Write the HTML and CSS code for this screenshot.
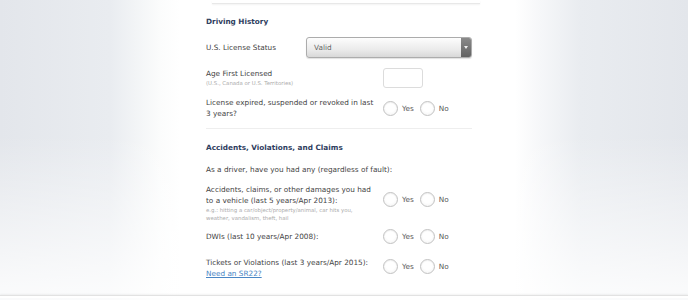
FILE: index.html
```
<!doctype html>
<html>
<head>
<meta charset="utf-8">
<title>Driving History</title>
<link rel="stylesheet" href="styles.css">
</head>
<body>
	<div class="top-edge"></div>
	<div class="form">
		<h2 class="title">Driving History</h2>

		<div class="row row-status">
			<div class="label label-short">U.S. License Status</div>
			<div class="select">
				<span class="select-text">Valid</span>
				<span class="select-arrow"></span>
			</div>
		</div>

		<div class="row row-age">
			<div class="label">
				Age First Licensed
				<div class="hint">(U.S., Canada or U.S. Territories)</div>
			</div>
			<div class="input"></div>
		</div>

		<div class="row row-expired">
			<div class="label">License expired, suspended or revoked in last 3 years?</div>
			<div class="options">
				<span class="radio"></span><span class="opt">Yes</span>
				<span class="radio"></span><span class="opt">No</span>
			</div>
		</div>

		<div class="divider"></div>

		<h2 class="title title-2">Accidents, Violations, and Claims</h2>
		<p class="intro">As a driver, have you had any (regardless of fault):</p>

		<div class="row row-acc">
			<div class="label">
				Accidents, claims, or other damages you had to a vehicle (last 5 years/Apr 2013):
				<div class="hint">e.g.: hitting a car/object/property/animal, car hits you, weather, vandalism, theft, hail</div>
			</div>
			<div class="options options-up">
				<span class="radio"></span><span class="opt">Yes</span>
				<span class="radio"></span><span class="opt">No</span>
			</div>
		</div>

		<div class="row row-dwi">
			<div class="label">DWIs (last 10 years/Apr 2008):</div>
			<div class="options">
				<span class="radio"></span><span class="opt">Yes</span>
				<span class="radio"></span><span class="opt">No</span>
			</div>
		</div>

		<div class="row row-tickets">
			<div class="label">
				Tickets or Violations (last 3 years/Apr 2015):
				<a href="javascript:;" class="link">Need an SR22?</a>
			</div>
			<div class="options options-up2">
				<span class="radio"></span><span class="opt">Yes</span>
				<span class="radio"></span><span class="opt">No</span>
			</div>
		</div>
	</div>
	<div class="bottom-edge"></div>
</body>
</html>
```
FILE: styles.css
```
*{margin:0; padding:0;}
html,body{height:300px; overflow:hidden;}
body{
	font-family:"DejaVu Sans", Verdana, sans-serif;
	font-size:7.3px;
	line-height:11px;
	color:#444;
	background:
		linear-gradient(to bottom, rgba(255,255,255,0) 45%, rgba(255,255,255,0.8) 96%),
		linear-gradient(to right, #e3e6eb 0, #e9ecf0 110px, #fbfcfc 160px, #fff 180px, #fff 515px, #f6f7f9 540px, #e9ecf0 580px, #e3e6eb 100%);
}
.top-edge{width:268px; height:3px; margin-left:212px; border-bottom:1px solid #e8e8e8; box-shadow:0 1px 2px rgba(0,0,0,0.05);}
.form{width:276px; margin:0 auto;}
.title{font-size:7.3px; line-height:11px; font-weight:bold; color:#2f4060; margin-top:12px;}
.title-2{margin-top:13px;}
.intro{margin-top:11px;}
.row{display:flex; align-items:center;}
.label{width:172px; flex:none;}
.label-short{width:100px;}
.hint{font-size:5.4px; line-height:8px; color:#ababab;}
.row-status{margin-top:10px;}
.row-age{margin-top:10px; align-items:flex-start;}
.row-expired{margin-top:9px;}
.row-acc{margin-top:9px;}
.row-dwi{margin-top:7px;}
.row-tickets{margin-top:13px;}
.select{
	width:164px; height:19px; display:flex; align-items:center;
	border:1px solid #acacac; border-radius:3px; overflow:hidden;
	background:linear-gradient(#fdfdfd, #ebebeb 60%, #d8d8d8);
	box-shadow:0 1px 1px rgba(0,0,0,0.12);
}
.select-text{flex:1; padding-left:7px; color:#666;}
.select-arrow{width:10px; height:19px; flex:none; position:relative; background:linear-gradient(#8a8a8a, #626262);}
.select-arrow:after{content:""; position:absolute; left:3px; top:8px; border-left:2px solid transparent; border-right:2px solid transparent; border-top:3px solid #eee;}
.input{width:38px; height:18px; margin-left:5px; border:1px solid #dcdcdc; border-radius:3px; background:#fff;}
.options{display:flex; align-items:center; margin-left:5px;}
.options-up{margin-bottom:7px;}
.options-up2{margin-bottom:3px;}
.radio{
	width:13px; height:13px; border-radius:50%; border:1px solid #c2c2c2;
	background:radial-gradient(circle at 50% 40%, #fff 45%, #efefef 100%);
	box-shadow:inset 0 1px 1px rgba(0,0,0,0.06);
}
.opt{margin-left:4px; margin-right:6px; color:#555;}
.divider{height:1px; background:#eeeeee; margin:9px 10px 0 0;}
.link{display:block; color:#4a86c5; text-decoration:underline;}
.bottom-edge{position:absolute; left:0; right:0; top:295px; height:2px; border-top:1px solid #e2e2e2; background:#fff; box-shadow:0 -1px 2px rgba(0,0,0,0.05);}
```
